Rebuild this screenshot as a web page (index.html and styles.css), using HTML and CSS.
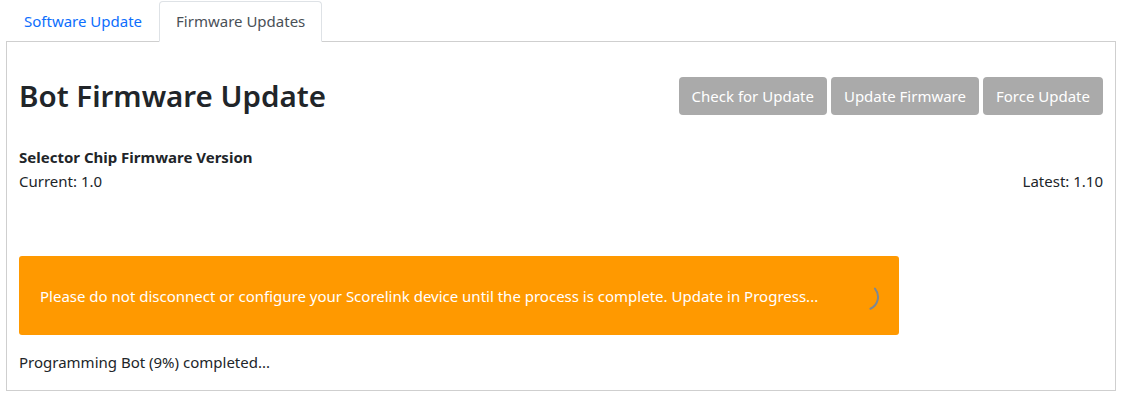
FILE: index.html
```html
<!DOCTYPE html>
<html>
<head>
<meta charset="utf-8">
<link rel="stylesheet" href="styles.css">
</head>
<body>
<div class="tabs">
  <a class="tab">Software Update</a>
  <a class="tab active">Firmware Updates</a>
</div>
<div class="panel">
  <div class="header">
    <h1>Bot Firmware Update</h1>
    <div class="actions">
      <button class="btn">Check for Update</button>
      <button class="btn">Update Firmware</button>
      <button class="btn">Force Update</button>
    </div>
  </div>
  <div class="version">
    <div class="label">Selector Chip Firmware Version</div>
    <div class="row"><span>Current: 1.0</span><span>Latest: 1.10</span></div>
  </div>
  <div class="alert">
    <span>Please do not disconnect or configure your Scorelink device until the process is complete. Update in Progress...</span>
    <svg class="spinner" width="30" height="30" viewBox="0 0 30 30"><path d="M24.96 6.64 A13 13 0 0 1 20.49 26.78" fill="none" stroke="#7d8894" stroke-width="2" stroke-linecap="round"/></svg>
  </div>
  <div class="progress">Programming Bot (9%) completed...</div>
</div>
</body>
</html>
```
FILE: styles.css
```css
* { box-sizing: border-box; }
body {
  margin: 1px 6px 0 6px;
  font-family: "Noto Sans", "Open Sans", sans-serif;
  font-size: 15px;
  color: #212529;
  background: #fff;
}
.tabs {
  display: flex;
  padding-left: 1px;
  margin-bottom: -1px;
}
.tab {
  display: block;
  padding: 8px 16px 10px;
  height: 41px;
  line-height: 22px;
  color: #0d6efd;
  border: 1px solid transparent;
  border-radius: 4px 4px 0 0;
}
.tab.active {
  color: #495057;
  background: #fff;
  border-color: #dee2e6 #dee2e6 #fff;
}
.panel {
  border: 1px solid #cfcfcf;
  height: 350px;
  padding: 0 12px;
  width: 1110px;
}
.header {
  display: flex;
  justify-content: space-between;
  align-items: center;
  padding-top: 35px;
}
h1 {
  margin: 0;
  font-size: 29.5px;
  font-weight: 600;
  line-height: 38px;
}
.actions { display: flex; gap: 4px; }
.btn {
  font-family: inherit;
  font-size: 15px;
  color: #fff;
  background: #aaaaaa;
  border: none;
  border-radius: 4px;
  height: 38px;
  padding: 0 13px;
}
.version { margin-top: 30px; line-height: 24px; }
.label { font-weight: 700; }
.row { display: flex; justify-content: space-between; }
.alert {
  margin-top: 63px;
  width: 880px;
  height: 79px;
  background: #ff9900;
  color: #fff;
  border-radius: 3px;
  display: flex;
  align-items: center;
  padding: 0 21px;
  justify-content: space-between;
}
.spinner {
  margin-right: -2px;
  margin-top: 2px;
}
.progress { margin-top: 15px; line-height: 24px; }
```
